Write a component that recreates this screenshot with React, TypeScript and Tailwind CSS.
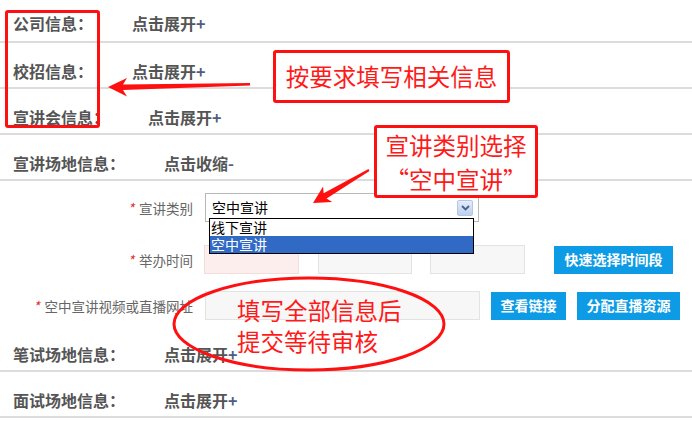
const font = { fontFamily: '"Noto Sans CJK SC", "Noto Sans", sans-serif' };

const SectionRow = ({ label, value, first }: { label: string; value: string; first?: boolean }) => (
  <div
    className={`flex items-start border-b-2 border-[#dcdcdc] pl-[13px] ${
      first ? "h-[43px] pt-[13px]" : "h-[46px] pt-[18px]"
    }`}
  >
    <span className="text-[16px] leading-[20px] font-bold text-[#555]">{label}</span>
    <span className="ml-[39px] text-[16px] leading-[20px] font-bold text-[#555]">
      {value.slice(0, -1)}
      <span className="text-[#4f5d7e]">{value.slice(-1)}</span>
    </span>
  </div>
);

const FieldLabel = ({ text }: { text: string }) => (
  <div className="w-[193px] shrink-0 text-right text-[13.5px] leading-[20px] text-[#666]">
    <span className="mr-[5px] text-[14px] text-[#e03030] italic">*</span>
    {text}
  </div>
);

const BlueButton = ({ text, w }: { text: string; w: string }) => (
  <button className={`${w} h-[28px] shrink-0 bg-[#0e9be5] text-[14px] font-bold text-white`}>{text}</button>
);

export default function App() {
  return (
    <div className="relative h-[424px] w-[692px] overflow-hidden bg-white" style={font}>
      <SectionRow label="公司信息：" value="点击展开+" first />
      <SectionRow label="校招信息：" value="点击展开+" />
      <SectionRow label="宣讲会信息：" value="点击展开+" />
      <SectionRow label="宣讲场地信息：" value="点击收缩-" />

      <div className="h-[145px] pt-[12px]">
        <div className="flex h-[29px] items-center">
          <FieldLabel text="宣讲类别" />
          <div className="relative ml-[12px] flex h-[29px] w-[274px] items-center border border-[#b8b8b8] pl-[6px]">
            <span className="text-[14px] text-black">空中宣讲</span>
            <div className="absolute right-[5px] top-[6px] flex h-[16px] w-[16px] items-center justify-center rounded-[2px] border border-[#b4c6e4] bg-gradient-to-b from-[#e4eefb] to-[#bcd0ef]">
              <svg width="9" height="6" viewBox="0 0 9 6">
                <path d="M1 1 L4.5 4.5 L8 1" fill="none" stroke="#4a5f8c" strokeWidth="1.8" />
              </svg>
            </div>
            <div className="absolute left-[3px] top-[24px] z-10 w-[265px] border border-black bg-white">
              <div className="h-[17px] pl-[1px] text-[14px] leading-[17px] text-black">线下宣讲</div>
              <div className="h-[17px] bg-[#316ac5] pl-[1px] text-[14px] leading-[17px] text-white">空中宣讲</div>
            </div>
          </div>
        </div>

        <div className="mt-[23px] flex h-[29px] items-center">
          <FieldLabel text="举办时间" />
          <div className="ml-[11px] h-[29px] w-[95px] border border-[#f3dcdc] bg-[#fdeeee]" />
          <div className="ml-[19px] h-[29px] w-[94px] border border-[#e3e3e3] bg-[#f7f7f7]" />
          <div className="ml-[18px] h-[29px] w-[95px] border border-[#e3e3e3] bg-[#f7f7f7]" />
          <div className="ml-[29px]">
            <BlueButton text="快速选择时间段" w="w-[119px]" />
          </div>
        </div>

        <div className="mt-[17px] flex h-[29px] items-center">
          <FieldLabel text="空中宣讲视频或直播网址" />
          <div className="ml-[12px] h-[29px] w-[275px] border border-[#e3e3e3] bg-[#f7f7f7]" />
          <div className="ml-[11px] flex gap-[11px]">
            <BlueButton text="查看链接" w="w-[75px]" />
            <BlueButton text="分配直播资源" w="w-[103px]" />
          </div>
        </div>
      </div>

      <SectionRow label="笔试场地信息：" value="点击展开+" />
      <SectionRow label="面试场地信息：" value="点击展开+" />

      {/* annotations */}
      <div className="absolute left-[5px] top-[10px] h-[118px] w-[95px] rounded-[3px] border-[3px] border-[#ff1010]" />
      <div className="absolute left-[273px] top-[50px] flex h-[53px] w-[237px] items-center justify-center rounded-[3px] border-[3px] border-[#ff1010] bg-white text-[23.5px] text-[#ff1a1a]">
        按要求填写相关信息
      </div>
      <div className="absolute left-[374px] top-[125px] z-20 flex h-[73px] w-[164px] flex-col items-center justify-center rounded-[3px] border-[3px] border-[#ff1010] bg-white text-[23.5px] leading-[34px] text-[#ff1a1a]">
        <span>宣讲类别选择</span>
        <span>“空中宣讲”</span>
      </div>

      <svg className="pointer-events-none absolute left-0 top-0 z-20" width="692" height="424">
        <polygon
          points="108,87 127,78 123,84.5 250,83 250,85.5 123,90 127,96.5"
          fill="#ff1010"
        />
        <polygon
          points="313,203 323.1,186.6 323.6,193.3 368.5,169.1 369.5,170.9 326.6,198.5 332.2,202.1"
          fill="#ff1010"
        />
        <ellipse cx="309" cy="324" rx="135" ry="46" fill="none" stroke="#ff1010" strokeWidth="3" />
      </svg>

      <div className="absolute left-[237px] top-[295px] z-20 text-[23.5px] leading-[31px] text-[#ff1a1a]">
        <div>填写全部信息后</div>
        <div>提交等待审核</div>
      </div>
    </div>
  );
}
